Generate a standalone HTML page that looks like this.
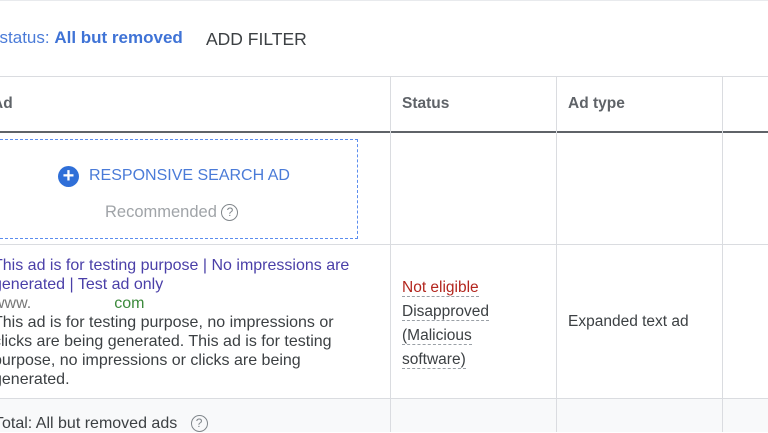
<!DOCTYPE html>
<html><head><style>
body{margin:0;width:768px;height:432px;overflow:hidden;background:#fff;font-family:"Liberation Sans",Arial,sans-serif;position:relative;color:#3c4043}
.a{position:absolute;white-space:nowrap}
.vl{position:absolute;width:1px;background:#dadce0}
.hl{position:absolute;height:1px;background:#dadce0;left:0;width:768px}
.u{border-bottom:1px dashed #9aa0a6}
.q{display:inline-block;width:15px;height:15px;border:1.5px solid #80868b;border-radius:50%;font-size:12px;line-height:15px;text-align:center;color:#80868b;vertical-align:1px}
</style></head><body>
<div class="hl" style="top:0;background:#e8eaed"></div>
<div class="a" style="left:-26px;top:28px;font-size:17px;color:#4a7bd8">Ad status: <b style="color:#3f73d6">All but removed</b></div>
<div class="a" style="left:206px;top:29px;font-size:17.5px;color:#3c4043">ADD FILTER</div>

<div class="hl" style="top:76px"></div>
<div class="hl" style="top:131px;height:2px;background:#5f6368"></div>
<div class="hl" style="top:244px"></div>
<div class="hl" style="top:398px"></div>
<div style="position:absolute;left:0;top:399px;width:768px;height:33px;background:#f8f9fa"></div>
<div class="vl" style="left:390px;top:76px;height:356px"></div>
<div class="vl" style="left:556px;top:76px;height:356px"></div>
<div class="vl" style="left:722px;top:76px;height:356px"></div>

<div class="a" style="left:-8px;top:95px;font-size:15.5px;font-weight:bold;color:#5f6368">Ad</div>
<div class="a" style="left:402px;top:95px;font-size:15.5px;font-weight:bold;color:#5f6368">Status</div>
<div class="a" style="left:568px;top:95px;font-size:15.5px;font-weight:bold;color:#5f6368">Ad type</div>

<div style="position:absolute;left:-5px;top:139px;width:361px;height:98px;border:1.5px dashed #5b8def"></div>
<div style="position:absolute;left:58px;top:166px;width:21px;height:21px;border-radius:50%;background:#2f6fd8;color:#fff;font-size:20px;font-weight:bold;line-height:21px;text-align:center">+</div>
<div class="a" style="left:89px;top:167px;font-size:16px;color:#4a7bd8">RESPONSIVE SEARCH AD</div>
<div class="a" style="left:105px;top:203px;font-size:16.5px;color:#a0a4a8">Recommended <span class="q">?</span></div>

<div class="a" style="left:-7px;top:256px;font-size:16px;line-height:19px;color:#4a3fa8">This ad is for testing purpose | No impressions are<br>generated | Test ad only</div>
<div class="a" style="left:-7px;top:294px;font-size:16px;line-height:19px;color:#3c8a3c"><span style="color:#777">www.</span><span style="display:inline-block;width:83px"></span>com</div>
<div class="a" style="left:-7px;top:313px;font-size:16px;line-height:19px;color:#3c4043">This ad is for testing purpose, no impressions or<br>clicks are being generated. This ad is for testing<br>purpose, no impressions or clicks are being<br>generated.</div>

<div class="a" style="left:402px;top:276px;font-size:15.5px;line-height:24px;color:#3c4043"><span class="u" style="color:#b3261e">Not eligible</span><br><span class="u">Disapproved</span><br><span class="u">(Malicious</span><br><span class="u">software)</span></div>
<div class="a" style="left:568px;top:313px;font-size:15.5px;color:#3c4043">Expanded text ad</div>

<div class="a" style="left:-6px;top:415px;font-size:16px;color:#3c4043">Total: All but removed ads &nbsp;&nbsp;<span class="q">?</span></div>
</body></html>
